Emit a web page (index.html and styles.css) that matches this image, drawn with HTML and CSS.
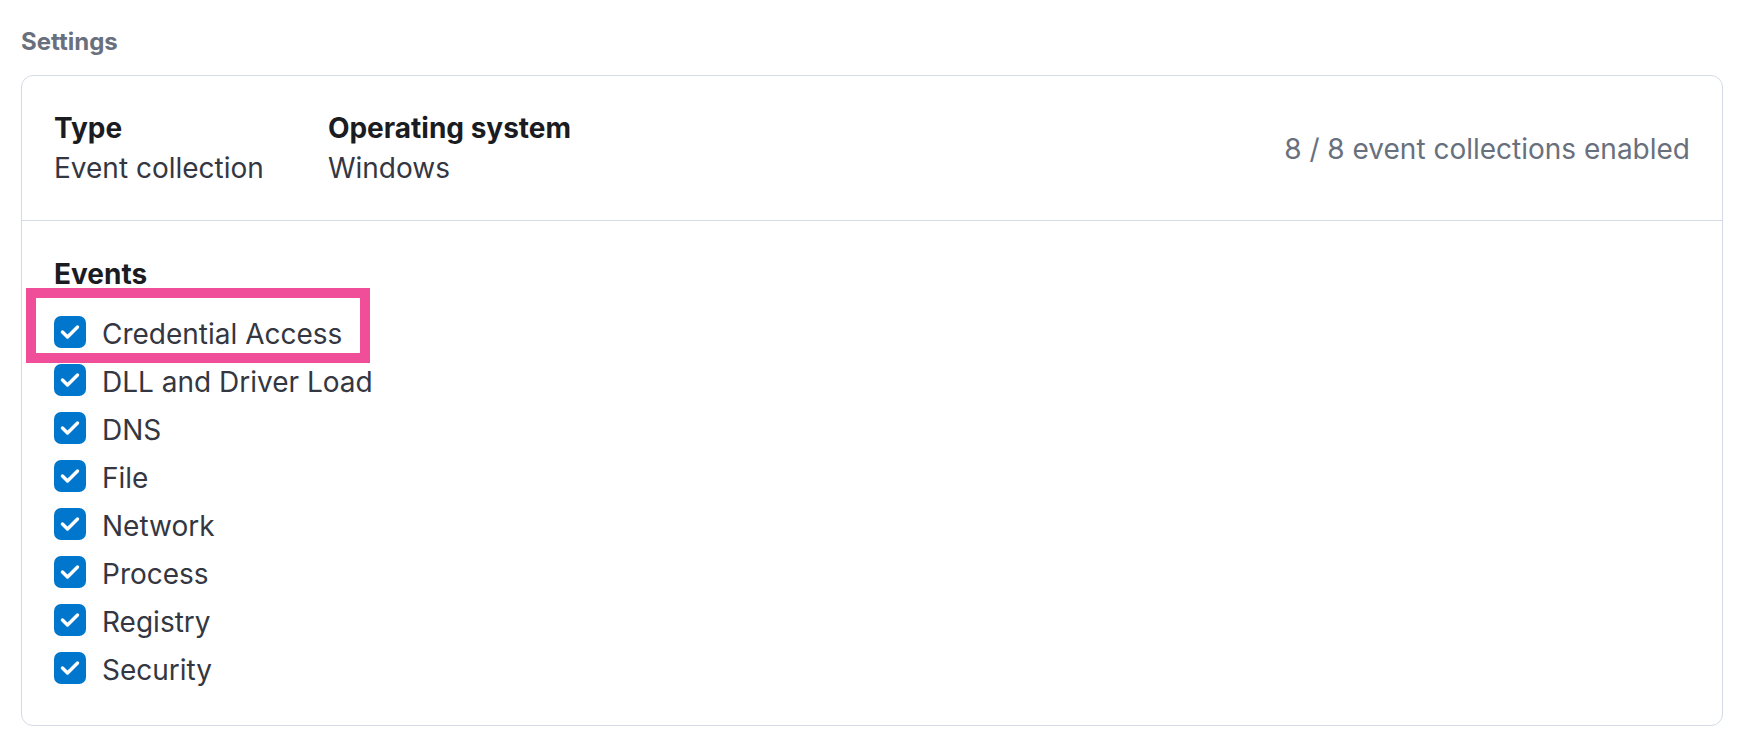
FILE: index.html
```html
<!DOCTYPE html>
<html lang="en">
<head>
<meta charset="utf-8">
<title>Settings</title>
<link rel="stylesheet" href="styles.css">
</head>
<body>
<h2 class="section-title">Settings</h2>
<div class="card">
  <div class="card-header">
    <div class="meta">
      <div class="meta-item">
        <div class="meta-label">Type</div>
        <div class="meta-value">Event collection</div>
      </div>
      <div class="meta-item">
        <div class="meta-label">Operating system</div>
        <div class="meta-value">Windows</div>
      </div>
    </div>
    <div class="summary">8 / 8 event collections enabled</div>
  </div>
  <div class="card-body">
    <div class="events-title">Events</div>
    <ul class="events">
      <li class="event highlighted">
        <span class="highlight"></span>
        <span class="checkbox"><svg viewBox="0 0 32 32" width="32" height="32"><path d="M8.5 16 L13.5 21 L23.5 11" fill="none" stroke="#fff" stroke-width="3.4" stroke-linecap="round" stroke-linejoin="round"/></svg></span>
        <span class="event-label">Credential Access</span>
      </li>
      <li class="event">
        <span class="checkbox"><svg viewBox="0 0 32 32" width="32" height="32"><path d="M8.5 16 L13.5 21 L23.5 11" fill="none" stroke="#fff" stroke-width="3.4" stroke-linecap="round" stroke-linejoin="round"/></svg></span>
        <span class="event-label">DLL and Driver Load</span>
      </li>
      <li class="event">
        <span class="checkbox"><svg viewBox="0 0 32 32" width="32" height="32"><path d="M8.5 16 L13.5 21 L23.5 11" fill="none" stroke="#fff" stroke-width="3.4" stroke-linecap="round" stroke-linejoin="round"/></svg></span>
        <span class="event-label">DNS</span>
      </li>
      <li class="event">
        <span class="checkbox"><svg viewBox="0 0 32 32" width="32" height="32"><path d="M8.5 16 L13.5 21 L23.5 11" fill="none" stroke="#fff" stroke-width="3.4" stroke-linecap="round" stroke-linejoin="round"/></svg></span>
        <span class="event-label">File</span>
      </li>
      <li class="event">
        <span class="checkbox"><svg viewBox="0 0 32 32" width="32" height="32"><path d="M8.5 16 L13.5 21 L23.5 11" fill="none" stroke="#fff" stroke-width="3.4" stroke-linecap="round" stroke-linejoin="round"/></svg></span>
        <span class="event-label">Network</span>
      </li>
      <li class="event">
        <span class="checkbox"><svg viewBox="0 0 32 32" width="32" height="32"><path d="M8.5 16 L13.5 21 L23.5 11" fill="none" stroke="#fff" stroke-width="3.4" stroke-linecap="round" stroke-linejoin="round"/></svg></span>
        <span class="event-label">Process</span>
      </li>
      <li class="event">
        <span class="checkbox"><svg viewBox="0 0 32 32" width="32" height="32"><path d="M8.5 16 L13.5 21 L23.5 11" fill="none" stroke="#fff" stroke-width="3.4" stroke-linecap="round" stroke-linejoin="round"/></svg></span>
        <span class="event-label">Registry</span>
      </li>
      <li class="event">
        <span class="checkbox"><svg viewBox="0 0 32 32" width="32" height="32"><path d="M8.5 16 L13.5 21 L23.5 11" fill="none" stroke="#fff" stroke-width="3.4" stroke-linecap="round" stroke-linejoin="round"/></svg></span>
        <span class="event-label">Security</span>
      </li>
    </ul>
  </div>
</div>
</body>
</html>
```

FILE: styles.css
```css
* {
  box-sizing: border-box;
}

html, body {
  margin: 0;
  background: #ffffff;
}

body {
  padding: 26px 21px 0 21px;
  font-family: Inter, "Noto Sans", sans-serif;
  color: #343741;
}

.section-title {
  margin: 0 0 17px 0;
  font-size: 24px;
  line-height: 32px;
  font-weight: 700;
  color: #69707d;
}

.card {
  border: 1px solid #d3dae6;
  border-radius: 12px;
  background: #ffffff;
}

.card-header {
  display: flex;
  align-items: center;
  justify-content: space-between;
  padding: 32px;
  border-bottom: 1px solid #d3dae6;
}

.meta {
  display: flex;
  gap: 64px;
}

.meta-label {
  font-size: 28px;
  line-height: 40px;
  font-weight: 700;
  color: #1a1c21;
}

.meta-value {
  font-size: 28px;
  line-height: 40px;
  color: #343741;
}

.summary {
  font-size: 28px;
  line-height: 40px;
  color: #69707d;
  padding-top: 2px;
}

.card-body {
  padding: 32px 32px 33px 32px;
}

.events-title {
  font-size: 28px;
  line-height: 40px;
  font-weight: 700;
  color: #1a1c21;
  padding-top: 1px;
  margin-bottom: 14px;
}

.events {
  list-style: none;
  margin: 0;
  padding: 0;
}

.event {
  display: flex;
  align-items: center;
  height: 48px;
  gap: 16px;
}

.highlighted {
  position: relative;
}

.highlight {
  position: absolute;
  left: -28px;
  top: -20px;
  width: 344px;
  height: 75px;
  border: 10px solid #f04e98;
}

.checkbox {
  width: 32px;
  height: 32px;
  border-radius: 7px;
  background: #0077cc;
  display: flex;
  flex: none;
}

.event-label {
  font-size: 28px;
  line-height: 48px;
  padding-top: 4px;
  color: #343741;
}
```
